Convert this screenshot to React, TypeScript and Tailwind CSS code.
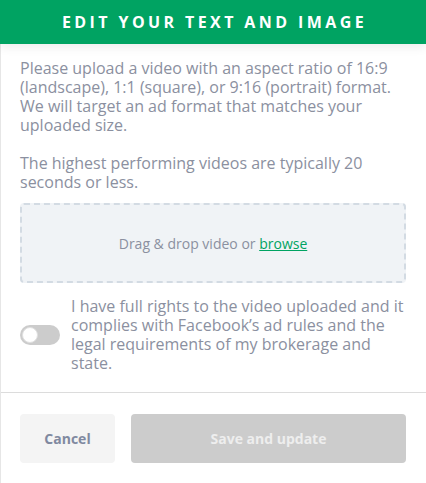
export default function App() {
  return (
    <div
      className="w-[426px] h-[483px] bg-white flex flex-col overflow-hidden"
      style={{ fontFamily: '"Open Sans", "Liberation Sans", sans-serif' }}
    >
      {/* Header */}
      <div className="relative z-10 h-[44px] shrink-0 bg-[#00a362] flex items-center justify-center shadow-[0_3px_10px_rgba(0,0,0,0.08)]">
        <h2 className="text-white text-[16px] font-bold uppercase tracking-[3.4px] leading-none pl-[3px]">
          Edit your text and image
        </h2>
      </div>

      <div className="flex-1 flex flex-col border-l border-[#e6e6e6]">
        {/* Body */}
        <div className="pl-[19px] pr-[20px] pt-[15px]">
          <p className="text-[16px] leading-[19px] text-[#8b90a0]">
            Please upload a video with an aspect ratio of 16:9 (landscape), 1:1 (square), or 9:16 (portrait) format. We will target an ad format that matches your uploaded size.
            <br />
            <br />
            The highest performing videos are typically 20 seconds or less.
          </p>

          <div className="mt-[11px] h-[80px] rounded-[4px] border-2 border-dashed border-[#d3dbe3] bg-[#f0f3f6] flex items-center justify-center">
            <span className="text-[14px] text-[#8b90a0]">
              Drag &amp; drop video or{" "}
              <a href="#" className="text-[#00a362] underline">
                browse
              </a>
            </span>
          </div>

          <div className="mt-[14px] flex items-center gap-[11px]">
            <button
              type="button"
              className="relative shrink-0 w-[40px] h-[20px] rounded-full bg-[#cccccc]"
            >
              <span className="absolute left-[2px] top-[2px] w-[16px] h-[16px] rounded-full bg-white border border-[#e0e0e0]" />
            </button>
            <p className="text-[16px] leading-[19px] text-[#8b90a0]">
              I have full rights to the video uploaded and it complies with Facebook’s ad rules and the legal requirements of my brokerage and state.
            </p>
          </div>
        </div>

        {/* Footer */}
        <div className="mt-[19px] border-t border-[#dcdcdc] pl-[19px] pr-[20px] pt-[21px] flex gap-[16px]">
          <button
            type="button"
            className="w-[95px] h-[49px] rounded-[4px] bg-[#f4f4f4] text-[14px] font-bold text-[#8089a0]"
          >
            Cancel
          </button>
          <button
            type="button"
            className="flex-1 h-[49px] rounded-[4px] bg-[#cccccc] text-[14px] font-bold text-[#eeeeee]"
          >
            Save and update
          </button>
        </div>
      </div>
    </div>
  );
}
